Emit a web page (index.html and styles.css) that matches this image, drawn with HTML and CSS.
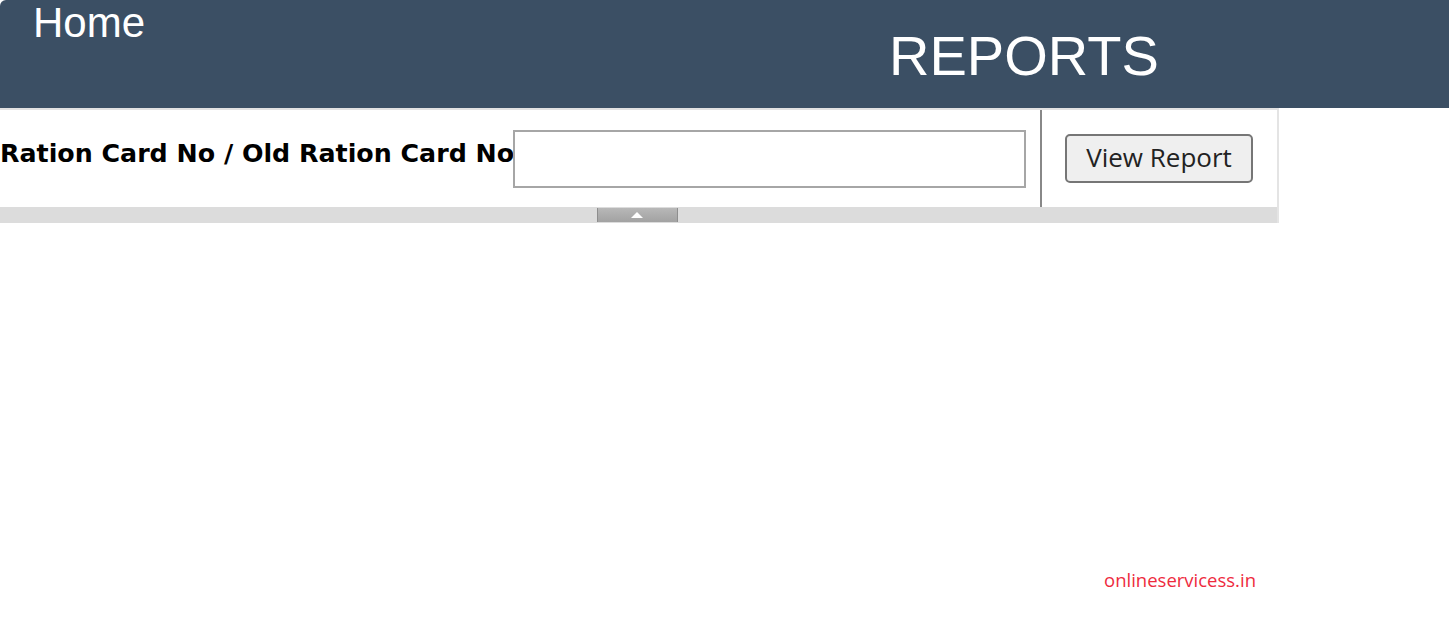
FILE: index.html
```html
<!DOCTYPE html>
<html lang="en">
<head>
  <meta charset="UTF-8">
  <meta name="viewport" content="width=device-width, initial-scale=1.0">
  <title>Reports</title>
  <link rel="stylesheet" href="styles.css">
</head>
<body>
  <div class="header">
    <a class="home-link" href="#">Home</a>
    <h1 class="page-title">REPORTS</h1>
  </div>

  <div class="panel">
    <div class="form-row">
      <label class="label-cell" for="ration-no">Ration Card No / Old Ration Card No</label>
      <div class="input-cell">
        <input type="text" id="ration-no" class="text-input">
      </div>
      <div class="separator"></div>
      <div class="button-cell">
        <button class="view-button" id="view-report">View Report</button>
      </div>
    </div>
    <div class="collapse-bar">
      <div class="collapse-handle"><span class="arrow-up"></span></div>
    </div>
  </div>

  <div class="watermark">onlineservicess.in</div>
</body>
</html>
```

FILE: styles.css
```css
body {
  margin: 0;
  font-family: 'Liberation Sans', Arial, sans-serif;
  background: #fff;
}
.header {
  height: 108px;
  background: #3b4f64;
  border-top-left-radius: 6px;
  display: flex;
  align-items: flex-start;
}
.home-link {
  color: #fff;
  text-decoration: none;
  font-size: 42px;
  line-height: 42px;
  padding: 2px 0 0 33px;
}
.page-title {
  margin: 23px 0 0 744px;
  color: #fff;
  font-weight: normal;
  font-size: 56px;
  line-height: normal;
}
.panel {
  width: 1279px;
  box-sizing: border-box;
  border-top: 2px solid #e2e2e2;
  border-right: 2px solid #e4e4e4;
}
.form-row {
  display: flex;
  height: 97px;
}
.label-cell {
  width: 513px;
  padding-top: 29px;
  font-family: 'DejaVu Sans', Verdana, sans-serif;
  font-weight: bold;
  font-size: 25.3px;
  white-space: nowrap;
  color: #000;
}
.input-cell {
  width: 527px;
  padding-top: 20px;
}
.text-input {
  width: 513px;
  height: 58px;
  box-sizing: border-box;
  border: 2px solid #a6a6a6;
  padding: 0 6px;
  font-size: 20px;
  outline: none;
}
.separator {
  width: 2px;
  background: #888;
}
.button-cell {
  padding: 24px 0 0 23px;
}
.view-button {
  height: 49px;
  width: 188px;
  box-sizing: border-box;
  border: 2px solid #767676;
  border-radius: 5px;
  background: #efefef;
  color: #222;
  font-family: 'Open Sans', sans-serif;
  font-size: 26px;
  line-height: 1;
  padding: 0 0 3px;
  cursor: pointer;
}
.collapse-bar {
  height: 16px;
  background: #dcdcdc;
  display: flex;
  justify-content: center;
  align-items: flex-end;
}
.collapse-handle {
  width: 81px;
  height: 14px;
  margin-right: 3px;
  margin-bottom: 1px;
  box-sizing: border-box;
  border-left: 1px solid #8e8e8e;
  border-right: 1px solid #8e8e8e;
  background: linear-gradient(#b8b8b8, #a2a2a2);
  display: flex;
  justify-content: center;
  align-items: center;
}
.arrow-up {
  width: 0;
  height: 0;
  border-left: 6px solid transparent;
  border-right: 6px solid transparent;
  border-bottom: 6px solid #fff;
}
.watermark {
  width: 1256px;
  margin-top: 344px;
  text-align: right;
  font-family: 'Open Sans', sans-serif;
  font-size: 18.5px;
  color: #ee2b3e;
}
```
